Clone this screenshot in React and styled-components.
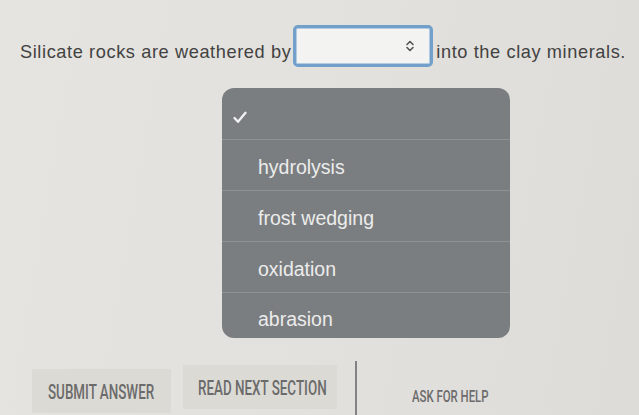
import React from "react";
import styled, { createGlobalStyle } from "styled-components";

const Global = createGlobalStyle`
  html, body { margin: 0; padding: 0; }
  body {
    width: 639px; height: 415px; overflow: hidden;
    background: linear-gradient(100deg, #e6e4e0 0%, #e3e1dd 50%, #dedcd8 100%);
    font-family: "Liberation Sans", Arial, sans-serif;
  }
`;

const Page = styled.div`
  width: 639px;
  height: 415px;
  display: flex;
  flex-direction: column;
  box-sizing: border-box;
  padding-top: 25px;
  overflow: hidden;
  & > * { flex-shrink: 0; }
`;

const Sentence = styled.div`
  display: flex;
  align-items: center;
  padding-left: 20px;
  font-size: 18.2px;
  letter-spacing: 0.6px;
  color: #424242;
  height: 42px;
`;

const Words = styled.span`
  padding-top: 12px;
  white-space: nowrap;
`;

const Select = styled.div`
  width: 134px;
  height: 36px;
  margin: 0 3px 0 2px;
  flex-shrink: 0;
  box-sizing: content-box;
  border: 3px solid #73a0cb;
  border-radius: 5px;
  background: #f3f3f2;
  display: flex;
  align-items: center;
  justify-content: flex-end;
  box-shadow: inset 0 0 0 1px #b3cbe2;
`;

const Chevron = styled.svg`
  width: 10px;
  height: 12px;
  margin-right: 15px;
`;

const Menu = styled.ul`
  list-style: none;
  margin: 21px 0 0 222px;
  padding: 0;
  width: 288px;
  background: #7b7e80;
  border-radius: 12px;
  overflow: hidden;
`;

const Item = styled.li`
  display: flex;
  align-items: center;
  box-sizing: border-box;
  height: ${(p) => (p.$last ? "46px" : "51px")};
  padding-left: ${(p) => (p.$check ? "11px" : "36px")};
  padding-top: ${(p) => (p.$check ? "8px" : p.$last ? "8px" : "5px")};
  color: #ececec;
  font-size: 19.5px;
  border-top: ${(p) => (p.$first ? "none" : "1px solid #8f9294")};
`;

const Toolbar = styled.div`
  display: flex;
  align-items: flex-start;
  margin-top: 23px;
  padding-left: 32px;
  height: 55px;
`;

const Button = styled.div`
  height: 44px;
  margin-top: ${(p) => p.$top};
  padding: 0 ${(p) => p.$pad};
  margin-right: ${(p) => p.$mr};
  background: ${(p) => (p.$plain ? "transparent" : "#dcdad5")};
  display: flex;
  align-items: center;
  font-family: Roboto, "Liberation Sans Narrow", sans-serif;
  font-weight: 500;
  font-size: ${(p) => p.$fs || "20px"};
  color: #6b6b6b;
`;

const Label = styled.span`
  display: block;
  width: ${(p) => p.$w}px;
  white-space: nowrap;
  overflow: visible;
  padding-top: 2px;
`;

const Inner = styled.span`
  display: inline-block;
  transform: scaleX(${(p) => p.$sx});
  transform-origin: left center;
`;

const Divider = styled.div`
  width: 2px;
  height: 55px;
  background: #828282;
  margin-right: 55px;
`;

export default function App() {
  return (
    <>
      <Global />
      <Page>
        <Sentence>
          <Words>Silicate rocks are weathered by</Words>
          <Select>
            <Chevron viewBox="0 0 10 12">
              <path d="M2 4.5 L5 1.5 L8 4.5 M2 7.5 L5 10.5 L8 7.5" fill="none" stroke="#555" strokeWidth="1.6" strokeLinecap="round" strokeLinejoin="round" />
            </Chevron>
          </Select>
          <Words>into the clay minerals.</Words>
        </Sentence>
        <Menu>
          <Item $first $check>
            <svg width="14" height="13" viewBox="0 0 14 13">
              <path d="M1.5 7 L5 10.8 L12.5 1.8" fill="none" stroke="#f2f2f2" strokeWidth="2.3" strokeLinecap="round" strokeLinejoin="round" />
            </svg>
          </Item>
          <Item>hydrolysis</Item>
          <Item>frost wedging</Item>
          <Item>oxidation</Item>
          <Item $last>abrasion</Item>
        </Menu>
        <Toolbar>
          <Button $top="8px" $pad="16px" $mr="12px"><Label $w={107}><Inner $sx={0.67}>SUBMIT ANSWER</Inner></Label></Button>
          <Button $top="4px" $pad="15px" $mr="18px"><Label $w={124}><Inner $sx={0.67}>READ NEXT SECTION</Inner></Label></Button>
          <Divider />
          <Button $plain $fs="17px" $top="12px" $pad="0px" $mr="0px"><Label $w={76}><Inner $sx={0.67}>ASK FOR HELP</Inner></Label></Button>
        </Toolbar>
      </Page>
    </>
  );
}
